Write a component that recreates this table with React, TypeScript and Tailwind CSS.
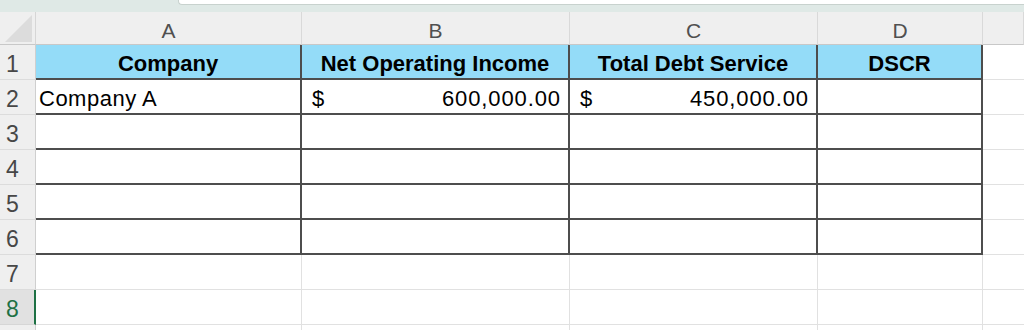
import React from 'react';

const letters = ['A', 'B', 'C', 'D', ''];

const headers = ['Company', 'Net Operating Income', 'Total Debt Service', 'DSCR'];

type Row = { company?: string; noi?: string; tds?: string };

const rows: Row[] = [
  { company: 'Company A', noi: '600,000.00', tds: '450,000.00' },
  {},
  {},
  {},
  {},
];

function Money({ value }: { value?: string }) {
  if (!value) return null;
  return (
    <div className="flex w-full justify-between pl-[10px] pr-[7px] tracking-[0.9px]">
      <span>$</span>
      <span>{value}</span>
    </div>
  );
}

function RowHead({ n, active }: { n?: number; active?: boolean }) {
  return (
    <div
      className={
        active
          ? 'flex items-center pl-[6px] pt-[4px] text-[23px] leading-none text-[#1e7145] bg-[#e1e1e1] border-r-2 border-r-[#1e7145] border-b border-b-[#d6d6d6]'
          : 'flex items-center pl-[6px] pt-[4px] text-[23px] leading-none text-[#474747] bg-[#efefef] border-r border-r-[#cfcfcf] border-b border-b-[#dcdcdc]'
      }
    >
      {n}
    </div>
  );
}

export default function App() {
  return (
    <div className="w-[1024px] h-[330px] overflow-hidden bg-white font-['Liberation_Sans',Arial,sans-serif] text-black">
      {/* formula bar edge */}
      <div className="flex h-[12px] bg-[#dfe9e6] pl-[178px]">
        <div className="h-[5px] flex-1 bg-white border-l border-b border-[#c8d2ce] rounded-bl-[4px]" />
      </div>

      <div className="grid grid-cols-[36px_266px_268px_248px_165px_1fr] grid-rows-[33px_repeat(9,35px)]">
        {/* corner */}
        <div className="flex items-end justify-end bg-[#efefef] border-r border-r-[#d6d6d6] border-b border-b-[#c8c8c8] pb-[2px] pr-[3px]">
          <svg width="27" height="27" viewBox="0 0 27 27">
            <path d="M27 0 L27 27 L0 27 Z" fill="#dcdcdc" />
          </svg>
        </div>
        {letters.map((l, i) => (
          <div
            key={i}
            className="flex items-center justify-center pt-[4px] text-[21px] leading-none text-[#505050] bg-[#efefef] border-r border-r-[#d9d9d9] border-b border-b-[#c8c8c8]"
          >
            {l}
          </div>
        ))}

        {/* row 1: headers */}
        <RowHead n={1} />
        {headers.map((h) => (
          <div
            key={h}
            className="flex items-center justify-center pt-[5px] text-[22px] leading-none font-bold bg-[#94dcf8] border-r-2 border-b-2 border-[#4d4d4d]"
          >
            {h}
          </div>
        ))}
        <div className="border-b border-[#e1e1e1]" />

        {/* rows 2-6 */}
        {rows.map((r, i) => (
          <React.Fragment key={i}>
            <RowHead n={i + 2} />
            <div className="flex items-center pt-[5px] pl-[3px] text-[22px] leading-none tracking-[0.5px] border-r-2 border-b-2 border-[#4d4d4d]">
              {r.company}
            </div>
            <div className="flex items-center pt-[5px] text-[22px] leading-none border-r-2 border-b-2 border-[#4d4d4d]">
              <Money value={r.noi} />
            </div>
            <div className="flex items-center pt-[5px] text-[22px] leading-none border-r-2 border-b-2 border-[#4d4d4d]">
              <Money value={r.tds} />
            </div>
            <div className="border-r-2 border-b-2 border-[#4d4d4d]" />
            <div className="border-b border-[#e1e1e1]" />
          </React.Fragment>
        ))}

        {/* rows 7-9 */}
        {[7, 8, 9].map((n) => (
          <React.Fragment key={n}>
            <RowHead n={n < 9 ? n : undefined} active={n === 8} />
            <div className="border-r border-b border-[#e1e1e1]" />
            <div className="border-r border-b border-[#e1e1e1]" />
            <div className="border-r border-b border-[#e1e1e1]" />
            <div className="border-r border-b border-[#e1e1e1]" />
            <div className="border-b border-[#e1e1e1]" />
          </React.Fragment>
        ))}
      </div>
    </div>
  );
}
